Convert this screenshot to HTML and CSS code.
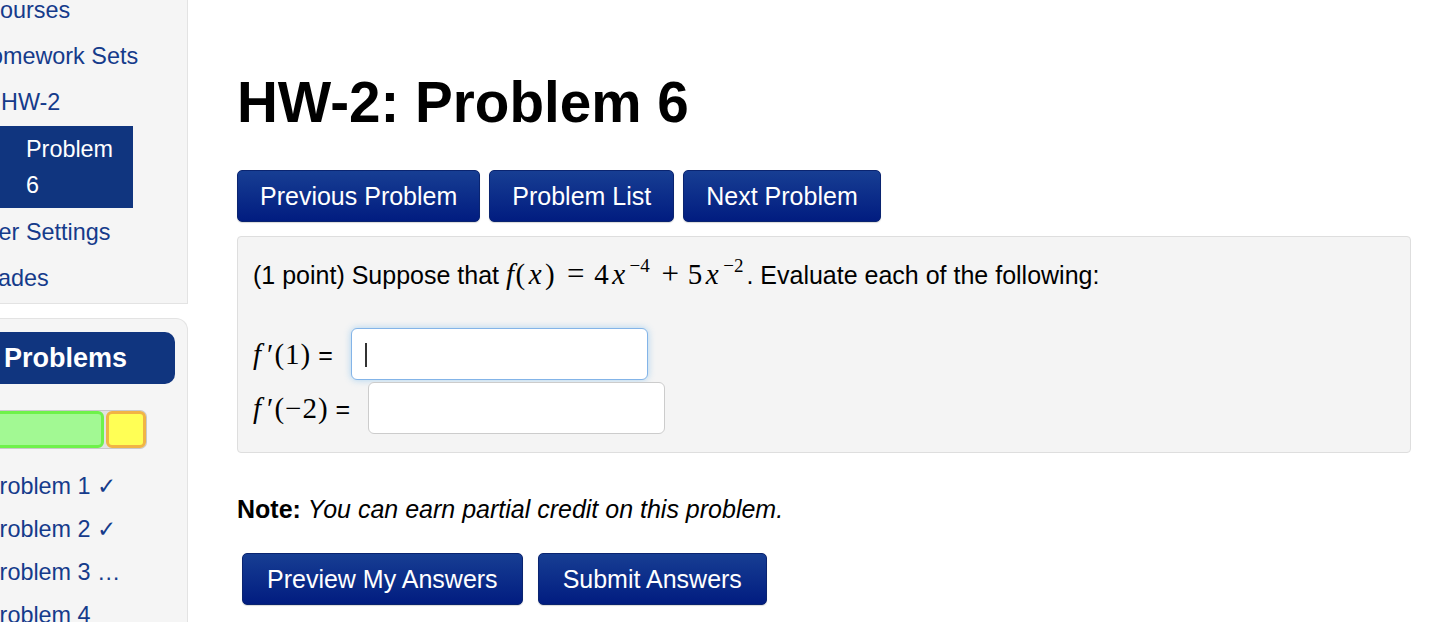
FILE: index.html
```html
<!DOCTYPE html>
<html lang="en">
<head>
<meta charset="utf-8">
<title>HW-2: Problem 6</title>
<link rel="stylesheet" href="styles.css">
</head>
<body>
<div class="page">
  <aside class="sidebar">
    <div class="nav-panel">
      <ul class="nav">
        <li class="nav-item nav-courses"><a href="#">Courses</a></li>
        <li class="nav-item nav-hw"><a href="#">Homework Sets</a></li>
        <li class="nav-item nav-l1"><a href="#">HW-2</a></li>
        <li class="nav-item nav-active"><a href="#">Problem 6</a></li>
        <li class="nav-item nav-user"><a href="#">User Settings</a></li>
        <li class="nav-item nav-grades"><a href="#">Grades</a></li>
      </ul>
    </div>
    <div class="problems-panel">
      <div class="problems-head">Problems</div>
      <div class="progress">
        <div class="seg seg-correct"></div>
        <div class="seg seg-partial"></div>
      </div>
      <ul class="plist">
        <li><a href="#">Problem 1 ✓</a></li>
        <li><a href="#">Problem 2 ✓</a></li>
        <li><a href="#">Problem 3 …</a></li>
        <li><a href="#">Problem 4</a></li>
      </ul>
    </div>
  </aside>
  <main class="main">
    <h1 class="title">HW-2: Problem 6</h1>
    <div class="btn-row">
      <a class="btn" href="#">Previous Problem</a>
      <a class="btn" href="#">Problem List</a>
      <a class="btn" href="#">Next Problem</a>
    </div>
    <div class="problem">
      <p class="statement">(1 point) Suppose that <span class="math"><i>f</i>(<i class="mx">x</i>)<span class="op op-eq">=</span>4<i class="mx">x</i><sup>−4</sup><span class="op op-plus">+</span>5<i class="mx">x</i><sup>−2</sup></span><span class="after-math">.</span> Evaluate each of the following:</p>
      <div class="answer-row">
        <span class="label"><span class="math"><i>f</i><span class="prime">′</span>(1)</span> =</span>
        <span class="field">
          <input class="ans ans-focus" type="text">
          <span class="caret"></span>
        </span>
      </div>
      <div class="answer-row">
        <span class="label"><span class="math"><i>f</i><span class="prime">′</span>(−2)</span> =</span>
        <span class="field"><input class="ans" type="text"></span>
      </div>
    </div>
    <p class="note"><b>Note:</b> <i>You can earn partial credit on this problem.</i></p>
    <div class="btn-row btn-row-submit">
      <a class="btn btn-wide" href="#">Preview My Answers</a>
      <a class="btn btn-wide" href="#">Submit Answers</a>
    </div>
  </main>
</div>
</body>
</html>
```
FILE: styles.css
```css
html, body {
  margin: 0;
  padding: 0;
  background: #fff;
  overflow: hidden;
}
body {
  font-family: "Liberation Sans", Arial, sans-serif;
  font-size: 25px;
  color: #000;
}
a { text-decoration: none; }

.page {
  display: grid;
  grid-template-columns: 188px 1fr;
  height: 622px;
}

/* ---------- sidebar ---------- */
.sidebar {
  display: flex;
  flex-direction: column;
  overflow: hidden;
  font-size: 23.4px;
}
.nav-panel {
  background: #f5f5f5;
  border-right: 1px solid #e3e3e3;
  border-bottom: 1px solid #e3e3e3;
  padding-bottom: 2px;
}
.nav {
  list-style: none;
  margin: -13px 0 0 -31px;
  padding: 0;
}
.nav-item {
  padding: 5px 0;
  line-height: 36px;
}
.nav-item a {
  color: #153b8b;
  white-space: nowrap;
}
.nav-courses { padding-left: 14px; }
.nav-hw { padding-left: 4px; }
.nav-user { padding-left: 1px; }
.nav-grades { padding-left: 3px; }
.nav-l1 { padding-left: 32px; }
.nav-active {
  margin: 1px 0;
  padding: 0;
}
.nav-active a {
  display: block;
  width: 99px;
  padding: 5px 8px 5px 57px;
  background: #10357f;
  color: #fff;
  white-space: normal;
}

.problems-panel {
  flex: 1;
  margin-top: 14px;
  background: #f5f5f5;
  border: 1px solid #e3e3e3;
  border-left: none;
  border-radius: 0 12px 0 0;
  padding-top: 13px;
}
.problems-head {
  margin-right: 12px;
  height: 52px;
  line-height: 52px;
  background: #10357f;
  color: #fff;
  font-weight: bold;
  font-size: 27px;
  padding-left: 4px;
  border-radius: 0 10px 10px 0;
}
.progress {
  display: flex;
  margin: 26px 40px 0 -12px;
  height: 37px;
  border: 1px solid #c9c9c9;
  border-left: none;
  border-radius: 0 7px 7px 0;
  background: #e2e2e2;
}
.seg {
  box-sizing: border-box;
  height: 37px;
  border-radius: 6px;
}
.seg-correct {
  flex: 1;
  background: #a2f993;
  border: 3px solid #6ef24a;
}
.seg-partial {
  width: 40px;
  margin-left: 2px;
  background: #ffff55;
  border: 3px solid #f1b444;
}
.plist {
  list-style: none;
  margin: 16px 0 0 -16px;
  padding: 0;
}
.plist li {
  line-height: 43px;
}
.plist a {
  color: #153b8b;
  white-space: nowrap;
}

/* ---------- main ---------- */
.main {
  padding: 0 20px 0 49px;
}
.title {
  margin: 69px 0 0;
  font-size: 56.6px;
  line-height: 67px;
  font-weight: bold;
}
.btn-row {
  display: flex;
  gap: 9px;
  margin-top: 34px;
}
.btn {
  box-sizing: border-box;
  height: 52px;
  line-height: 50px;
  padding: 0 22px;
  font-size: 25px;
  color: #fff;
  background: linear-gradient(180deg, #173e93 0%, #011c80 100%);
  border: 1px solid #0a2470;
  border-radius: 5px;
  box-shadow: 0 1px 1px rgba(0,0,0,0.15);
  white-space: nowrap;
}
.btn-wide { padding: 0 24px; }
.problem {
  margin-top: 14px;
  background: #f4f4f4;
  border: 1px solid #dedede;
  border-radius: 4px;
  padding: 20px 15px 18px;
}
.statement {
  margin: 0 0 35px;
  height: 36px;
  line-height: 36px;
  white-space: nowrap;
}
.math {
  font-family: "Liberation Serif", "Times New Roman", serif;
  font-size: 29px;
  letter-spacing: 1.5px;
  line-height: 1;
}
.math i { font-style: italic; }
.math .mx { padding: 0 2px; }
.math sup {
  font-size: 19px;
  letter-spacing: 0;
  vertical-align: 0;
  position: relative;
  top: -12px;
  margin-left: 1px;
}
.after-math { margin-left: 3px; }
.op {
  display: inline-block;
  width: 21px;
  text-align: center;
  letter-spacing: 0;
  font-size: 31px;
}
.op-eq { margin: 0 8px 0 9px; }
.op-plus { margin: 0 7px 0 10px; }
.answer-row {
  display: flex;
  align-items: center;
  height: 52px;
}
.answer-row + .answer-row { margin-top: 2px; }
.label {
  white-space: nowrap;
  margin-right: 18px;
  line-height: 1;
}
.label .math { letter-spacing: 1px; }
.prime { margin-left: 5px; }
.field {
  position: relative;
  display: inline-block;
  height: 52px;
}
.ans {
  box-sizing: border-box;
  width: 297px;
  height: 52px;
  border: 1px solid #cccccc;
  border-radius: 6px;
  background: #fff;
  font-size: 22px;
  padding: 0 12px;
  outline: none;
  display: block;
}
.ans-focus {
  border-color: #83b4e8;
  box-shadow: 0 0 7px rgba(82, 168, 236, 0.45);
}
.caret {
  position: absolute;
  left: 14px;
  top: 15px;
  width: 2px;
  height: 24px;
  background: #333;
}
.note {
  margin: 38px 0 0;
  line-height: 36px;
}
.btn-row-submit {
  margin-top: 26px;
  margin-left: 5px;
  gap: 15px;
}
```
